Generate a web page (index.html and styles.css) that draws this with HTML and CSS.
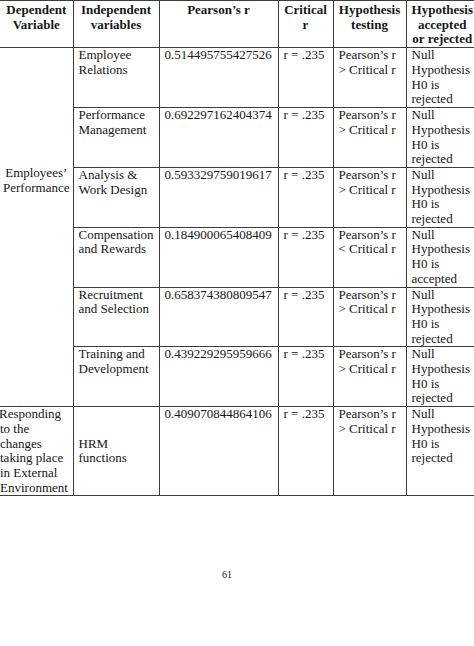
FILE: index.html
```html
<!DOCTYPE html>
<html>
<head>
<meta charset="utf-8">
<link rel="stylesheet" href="styles.css">
</head>
<body>
<div class="page">
<table class="results">
  <colgroup>
    <col class="c1"><col class="c2"><col class="c3"><col class="c4"><col class="c5"><col class="c6">
  </colgroup>
  <thead>
    <tr class="head">
      <th>Dependent Variable</th>
      <th>Independent variables</th>
      <th>Pearson’s r</th>
      <th>Critical<br>r</th>
      <th>Hypothesis testing</th>
      <th class="last">Hypothesis<br>accepted<br>or rejected</th>
    </tr>
  </thead>
  <tbody>
    <tr class="r61">
      <td rowspan="6" class="dep">Employees’ Performance</td>
      <td>Employee Relations</td>
      <td>0.514495755427526</td>
      <td>r = .235</td>
      <td>Pearson’s r &gt; Critical r</td>
      <td>Null Hypothesis H0 is rejected</td>
    </tr>
    <tr class="r60">
      <td>Performance Management</td>
      <td>0.692297162404374</td>
      <td>r = .235</td>
      <td>Pearson’s r &gt; Critical r</td>
      <td>Null Hypothesis H0 is rejected</td>
    </tr>
    <tr class="r60">
      <td>Analysis &amp; Work Design</td>
      <td>0.593329759019617</td>
      <td>r = .235</td>
      <td>Pearson’s r &gt; Critical r</td>
      <td>Null Hypothesis H0 is rejected</td>
    </tr>
    <tr class="r60">
      <td>Compensation and Rewards</td>
      <td>0.184900065408409</td>
      <td>r = .235</td>
      <td>Pearson’s r &lt; Critical r</td>
      <td>Null Hypothesis H0 is accepted</td>
    </tr>
    <tr class="r60">
      <td>Recruitment and Selection</td>
      <td>0.658374380809547</td>
      <td>r = .235</td>
      <td>Pearson’s r &gt; Critical r</td>
      <td>Null Hypothesis H0 is rejected</td>
    </tr>
    <tr class="r60">
      <td>Training and Development</td>
      <td>0.439229295959666</td>
      <td>r = .235</td>
      <td>Pearson’s r &gt; Critical r</td>
      <td>Null Hypothesis H0 is rejected</td>
    </tr>
    <tr class="r89">
      <td class="dep2">Responding to the changes taking place in External Environment</td>
      <td class="mid">HRM functions</td>
      <td>0.409070844864106</td>
      <td>r = .235</td>
      <td>Pearson’s r &gt; Critical r</td>
      <td>Null Hypothesis H0 is rejected</td>
    </tr>
  </tbody>
</table>
<div class="pagenum">61</div>
</div>
</body>
</html>
```
FILE: styles.css
```css
html, body {
  margin: 0;
  padding: 0;
  background: #ffffff;
}
.page {
  width: 474px;
  height: 646px;
  overflow: hidden;
  font-family: "Liberation Serif", "Times New Roman", serif;
  color: #161616;
}
.results {
  border-collapse: collapse;
  table-layout: fixed;
  width: 474px;
  font-size: 13px;
  line-height: 14.7px;
}
.c1 { width: 73px; }
.c2 { width: 86px; }
.c3 { width: 119px; }
.c4 { width: 55px; }
.c5 { width: 73px; }
.c6 { width: 68px; }
.results th,
.results td {
  border: 1px solid #3c3c3c;
  vertical-align: top;
  padding: 0 0 0 5px;
  text-align: left;
  font-weight: normal;
}
.results th {
  font-weight: bold;
  text-align: center;
  padding: 2px 0 0 0;
}
.results th.last {
  padding-left: 4px;
  border-right: none;
}
.results tr > :first-child {
  border-left: none;
}
.results tr > :last-child {
  border-right: none;
}
.head { height: 47px; }
.r61 { height: 60px; }
.r60 { height: 59px; }
.r89 { height: 88px; }
.results td.dep {
  text-align: center;
  padding: 118px 0 0 0;
}
.results td.dep2 {
  padding: 0;
  text-indent: -1px;
}
.results td.mid {
  vertical-align: middle;
}
.pagenum {
  margin-top: 73px;
  padding-left: 222px;
  font-size: 10px;
  line-height: 12px;
}
```
